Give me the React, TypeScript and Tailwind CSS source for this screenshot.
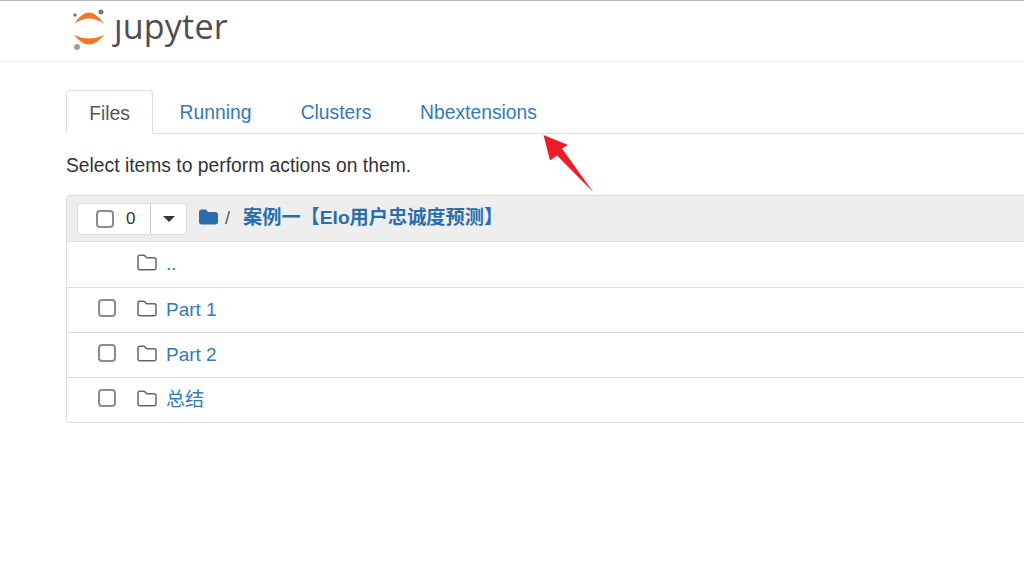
function FolderOutline() {
  return (
    <svg width="20" height="17" viewBox="0 0 20 17" fill="none" className="shrink-0 -mt-[4px]">
      <path
        d="M1 3.2C1 2 1.8 1.2 3 1.2h3.6c.7 0 1.1.3 1.5.8l1 1.3c.2.3.5.4.9.4H17c1.2 0 2 .8 2 2v8.1c0 1.2-.8 2-2 2H3c-1.200 0-2-.8-2-2z"
        stroke="#666"
        strokeWidth="1.5"
      />
    </svg>
  );
}

function Checkbox({ className = '' }: { className?: string }) {
  return <span className={`block w-[18px] h-[18px] rounded-[4px] border-2 border-[#8c8c8c] bg-white shrink-0 ${className}`}></span>;
}

function Row({ name, checkbox = true }: { name: string; checkbox?: boolean }) {
  return (
    <div className={`${checkbox ? 'h-[45px]' : 'h-[46px]'} flex items-center border-b border-[#ddd] last:h-[44px] last:border-b-0 pl-[31px]`}>
      <div className="w-[39px] shrink-0">{checkbox && <Checkbox className="-mt-[4px]" />}</div>
      <FolderOutline />
      <span className="ml-[9px] text-[19px] text-[#337ab7]">{name}</span>
    </div>
  );
}

export default function App() {
  return (
    <div className="relative w-[1024px] h-[572px] overflow-hidden bg-white font-['Liberation_Sans','Noto_Sans_CJK_SC',sans-serif]">
      <header className="h-[62px] border-t border-t-[#b8b8b8] border-b border-b-[#eee] pl-[72px] flex items-center">
        <svg width="34" height="42" viewBox="0 0 34 42" className="shrink-0 -mt-[2px]">
          <path d="M2 15Q17 -8 32 15Q17 4 2 15Z" fill="#f37726" />
          <path d="M2 26Q17 45 32 26Q17 33 2 26Z" fill="#f37726" />
          <circle cx="29" cy="3" r="2.500" fill="#767677" />
          <circle cx="3" cy="6" r="1.800" fill="#767677" />
          <circle cx="5" cy="38" r="3" fill="#9e9e9e" />
        </svg>
        <span className="ml-[8px] -mt-[10px] text-[34px] leading-none tracking-[0.200px] text-[#4e4e4e] font-['Open_Sans',sans-serif]">ȷupyter</span>
      </header>

      <main className="pl-[66px] pt-[28px]">
        <nav className="h-[44px] flex border-b border-[#ddd] text-[19.300px] text-[#337ab7]">
          <div className="h-[44px] w-[87px] pt-[4px] flex items-center justify-center bg-white border border-[#ddd] border-b-white rounded-t-[4px] text-[#555]">Files</div>
          <div className="ml-[2px] w-[121px] pt-[4px] flex items-center justify-center">Running</div>
          <div className="w-[120px] pt-[4px] flex items-center justify-center">Clusters</div>
          <div className="w-[165px] pt-[4px] flex items-center justify-center">Nbextensions</div>
        </nav>

        <p className="mt-[21px] text-[19.300px] leading-[22px] text-[#333]">Select items to perform actions on them.</p>

        <section className="mt-[18px] w-[1000px] border border-[#ddd] rounded-[4px] overflow-hidden">
          <div className="h-[46px] bg-[#eee] border-b border-[#ddd] flex items-center pl-[10px]">
            <div className="h-[32px] w-[110px] flex bg-white border border-[#ddd] rounded-[2px]">
              <div className="w-[73px] flex items-center pl-[18px] border-r border-[#ccc]">
                <Checkbox />
                <span className="ml-[12px] text-[17px] text-[#333]">0</span>
              </div>
              <div className="flex-1 flex items-center justify-center">
                <span className="block w-0 h-0 border-x-[6px] border-x-transparent border-t-[6px] border-t-[#333]"></span>
              </div>
            </div>
            <svg width="19" height="16" viewBox="0 0 19 16" className="ml-[12px] shrink-0 -mt-[3px]">
              <path d="M0 3C0 1.500 1 .5 2.500 .5H6c1 0 1.500.5 2 1.200L9 3h7.500C18 3 19 4 19 5.500V13c0 1.500-1 2.500-2.500 2.500h-14C1 15.500 0 14.500 0 13z" fill="#296eaa" />
            </svg>
            <span className="ml-[7px] text-[18px] text-[#555]">/</span>
            <span className="ml-[13px] text-[19.200px] font-bold text-[#296eaa]">案例一【Elo用户忠诚度预测】</span>
          </div>
          <Row name=".." checkbox={false} />
          <Row name="Part 1" />
          <Row name="Part 2" />
          <Row name="总结" />
        </section>
      </main>

      <svg width="60" height="66" viewBox="0 0 60 66" className="absolute left-[540px] top-[131px]">
        <polygon points="3.500,4 28,14 22,17.500 53.500,61.500 17,24.500 10,29.500" fill="#ee1c25" />
      </svg>
    </div>
  );
}
